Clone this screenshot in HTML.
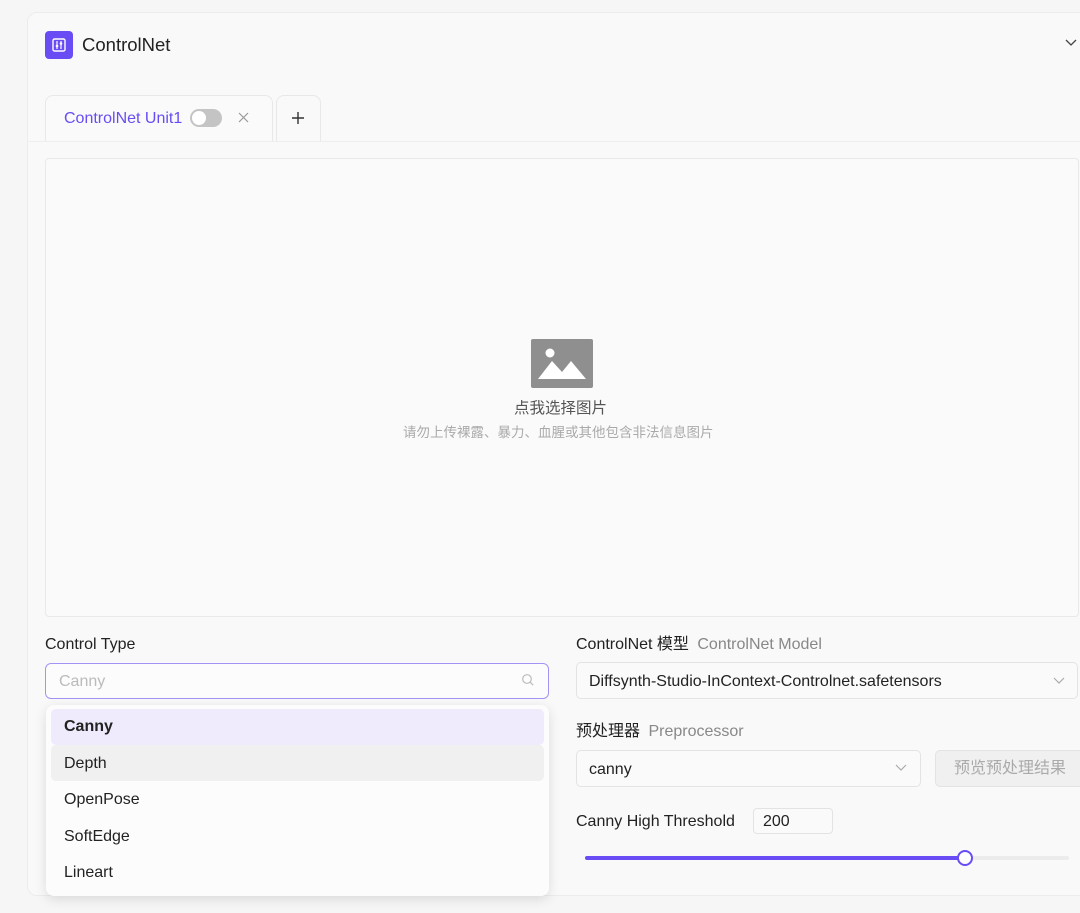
<!DOCTYPE html>
<html><head><meta charset="utf-8"><style>
*{box-sizing:border-box;margin:0;padding:0}
body{width:1080px;height:913px;background:#f6f6f6;font-family:"Liberation Sans","Noto Sans CJK SC",sans-serif;position:relative;overflow:hidden;color:#222}
.card{position:absolute;left:27px;top:12px;width:1070px;height:884px;background:#f9f9f9;border:1px solid #ececec;border-radius:10px}
.abs{position:absolute}
.icon{left:45px;top:31px;width:28px;height:28px;background:#6a4cf5;border-radius:4px}
.title{left:82px;top:34px;font-size:18.5px;color:#222}
.tab{left:45px;top:95px;width:228px;height:46px;background:#fafafa;border:1px solid #e8e8e8;border-bottom:none;border-radius:8px 8px 0 0}
.tab2{left:276px;top:95px;width:45px;height:46px;border:1px solid #e8e8e8;border-bottom:none;border-radius:8px 8px 0 0}
.upload{left:45px;top:158px;width:1034px;height:459px;background:#fafafa;border:1px solid #e9e9e9;border-radius:4px}
.lbl{font-size:16px;color:#222;line-height:20px}
.sel{border:1px solid #e3e3e3;border-radius:5px;background:#fafafa;font-size:16px}
.it{font-size:16px;left:64px}
</style></head><body>
<div class="card"></div>
<div class="abs" style="left:27px;top:141px;width:1053px;height:1px;background:#eee"></div>
<div class="abs icon"><svg width="28" height="28"><rect x="8" y="8" width="12" height="12" rx="1.5" fill="none" stroke="#fff" stroke-width="1.4"/><path d="M12 10v8M16 10v8" stroke="#fff" stroke-width="1.2"/><circle cx="12" cy="15" r="1.3" fill="#fff"/><circle cx="16" cy="12.5" r="1.3" fill="#fff"/></svg></div>
<div class="abs title">ControlNet</div>
<svg class="abs" style="left:1064px;top:38px" width="14" height="10"><path d="M2 2l5 5 5-5" fill="none" stroke="#444" stroke-width="1.3"/></svg>
<div class="abs tab"></div>
<div class="abs" style="left:64px;top:110px;font-size:16px;color:#6a4cf5">ControlNet Unit1</div>
<div class="abs" style="left:190px;top:109px;width:32px;height:18px;border-radius:9px;background:#c4c4c4"><div style="position:absolute;left:2px;top:2px;width:14px;height:14px;border-radius:50%;background:#fff"></div></div>
<svg class="abs" style="left:237px;top:111px" width="13" height="13"><path d="M2 2l9 9M11 2l-9 9" stroke="#999" stroke-width="1.2"/></svg>
<div class="abs tab2"></div>
<svg class="abs" style="left:290px;top:110px" width="16" height="16"><path d="M8 2v12M2 8h12" stroke="#333" stroke-width="1.4"/></svg>
<div class="abs upload"></div>
<svg class="abs" style="left:531px;top:339px" width="62" height="49"><rect width="62" height="49" rx="2" fill="#8f8f8f"/><circle cx="19" cy="14" r="4.5" fill="#fff"/><path d="M7 40l14-18 10 11 9-11 15 18z" fill="#fff"/></svg>
<div class="abs" style="left:514px;top:396px;font-size:15.5px;color:#555">点我选择图片</div>
<div class="abs" style="left:403px;top:421px;font-size:13.5px;color:#aaa">请勿上传裸露、暴力、血腥或其他包含非法信息图片</div>
<div class="abs lbl" style="left:45px;top:635px">Control Type</div>
<div class="abs" style="left:45px;top:663px;width:504px;height:36px;border:1.5px solid #a493f7;border-radius:6px;background:#fcfcfc"></div>
<div class="abs" style="left:59px;top:673px;font-size:16px;color:#bbb">Canny</div>
<svg class="abs" style="left:521px;top:673px" width="14" height="14"><circle cx="6" cy="6" r="4.3" fill="none" stroke="#bbb" stroke-width="1.2"/><path d="M9.2 9.2l3 3" stroke="#bbb" stroke-width="1.2"/></svg>
<div class="abs" style="left:46px;top:705px;width:503px;height:191px;background:#fcfcfc;border-radius:8px;box-shadow:0 3px 12px rgba(0,0,0,.12)"></div>
<div class="abs" style="left:51px;top:709px;width:493px;height:36px;background:#efebfc;border-radius:5px"></div>
<div class="abs" style="left:51px;top:745px;width:493px;height:36px;background:#f0f0f0;border-radius:5px"></div>
<div class="abs it" style="top:718px;font-weight:bold">Canny</div>
<div class="abs it" style="top:755px">Depth</div>
<div class="abs it" style="top:791px">OpenPose</div>
<div class="abs it" style="top:828px">SoftEdge</div>
<div class="abs it" style="top:864px">Lineart</div>
<div class="abs lbl" style="left:576px;top:635px">ControlNet 模型 <span style="color:#888;margin-left:4px">ControlNet Model</span></div>
<div class="abs sel" style="left:576px;top:662px;width:502px;height:37px"></div>
<div class="abs" style="left:589px;top:673px;font-size:16px">Diffsynth-Studio-InContext-Controlnet.safetensors</div>
<svg class="abs" style="left:1052px;top:676px" width="14" height="10"><path d="M2 2l5 5 5-5" fill="none" stroke="#aaa" stroke-width="1.2"/></svg>
<div class="abs lbl" style="left:576px;top:722px">预处理器 <span style="color:#888;margin-left:4px">Preprocessor</span></div>
<div class="abs sel" style="left:576px;top:750px;width:345px;height:37px"></div>
<div class="abs" style="left:589px;top:761px;font-size:16px">canny</div>
<svg class="abs" style="left:894px;top:763px" width="14" height="10"><path d="M2 2l5 5 5-5" fill="none" stroke="#aaa" stroke-width="1.2"/></svg>
<div class="abs" style="left:935px;top:750px;width:150px;height:37px;background:#f0f0f0;border:1px solid #e3e3e3;border-radius:5px;font-size:16px;line-height:20px;color:#aaa;padding:8px 0 0 18px">预览预处理结果</div>
<div class="abs lbl" style="left:576px;top:812px">Canny High Threshold</div>
<div class="abs" style="left:753px;top:808px;width:80px;height:26px;border:1px solid #e3e3e3;border-radius:4px;background:#fafafa;font-size:16px;padding:4px 0 0 9px">200</div>
<div class="abs" style="left:585px;top:856px;width:484px;height:4px;border-radius:2px;background:#ececec"></div>
<div class="abs" style="left:585px;top:856px;width:380px;height:4px;border-radius:2px;background:#6a4cf5"></div>
<div class="abs" style="left:957px;top:850px;width:16px;height:16px;border-radius:50%;background:#fff;border:2.5px solid #6a4cf5"></div>
</body></html>
